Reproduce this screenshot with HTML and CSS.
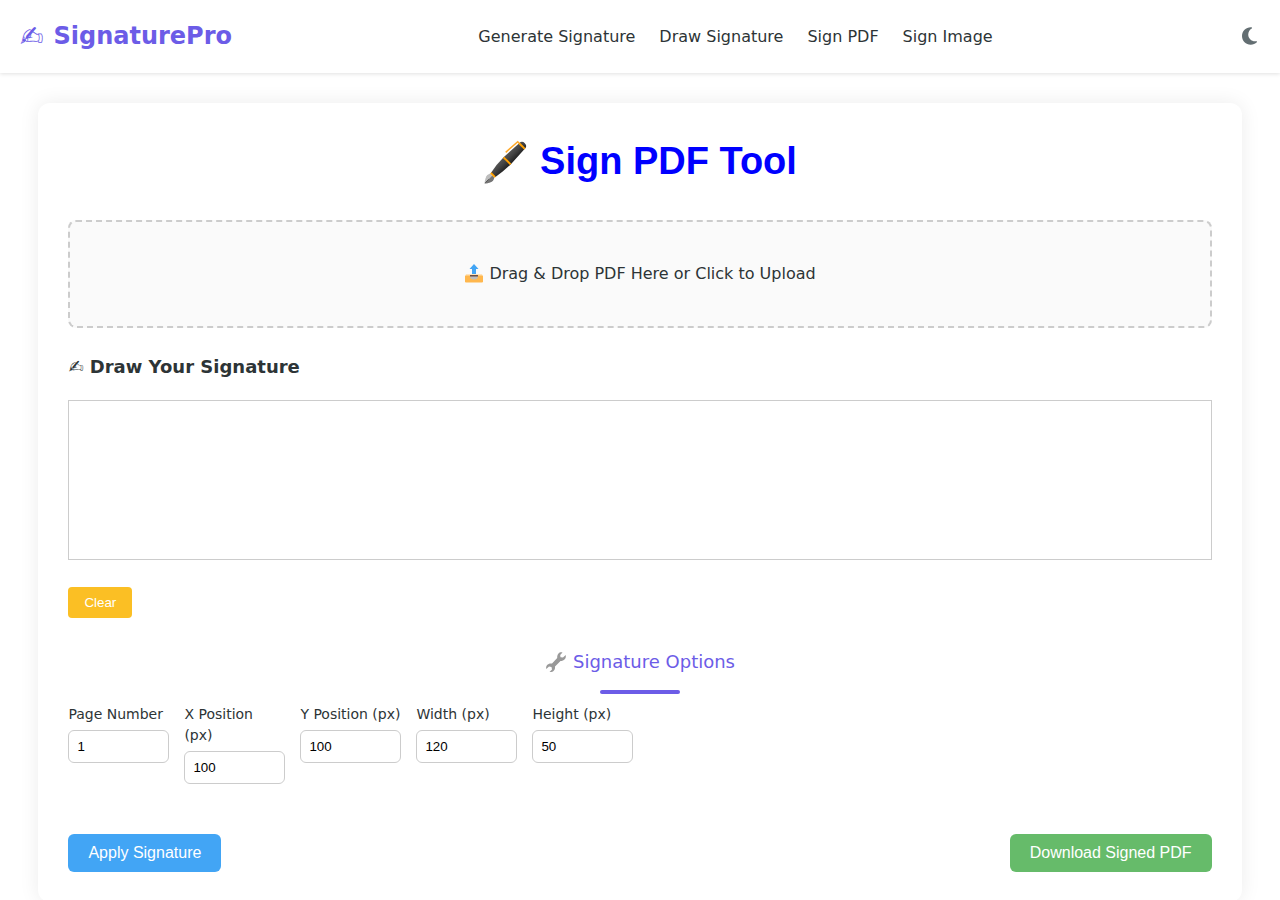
FILE: index.html
```html
<!DOCTYPE html>
<html lang="en">
<head>
<meta charset="utf-8">
<title>Sign PDF Tool - SignaturePro</title>
<link rel="stylesheet" href="styles.css">
</head>
<body>
<header class="navbar">
  <a class="logo" href="#"><span class="logo-icon">✍</span><span>SignaturePro</span></a>
  <nav class="nav-links">
    <a href="#">Generate Signature</a>
    <a href="#">Draw Signature</a>
    <a href="#">Sign PDF</a>
    <a href="#">Sign Image</a>
  </nav>
  <button class="theme-toggle" type="button" aria-label="Toggle dark mode">
    <svg viewBox="0 0 384 512" aria-hidden="true"><path d="M223.500 32C100 32 0 132.300 0 256S100 480 223.500 480c60.600 0 115.500-24.200 155.800-63.400c5-4.900 6.300-12.500 3.100-18.700s-10.100-9.700-17-8.500c-9.800 1.700-19.800 2.600-30.100 2.600c-96.900 0-175.500-78.800-175.500-176c0-65.800 36-123.100 89.300-153.300c6.100-3.500 9.200-10.500 7.700-17.300s-7.300-11.900-14.300-12.500c-6.300-.5-12.600-.8-19-.8z"/></svg>
  </button>
</header>
<main class="tool">
  <h1>
    <svg class="pen" viewBox="0 0 46 46" aria-hidden="true">
      <defs>
        <linearGradient id="barrel" x1="0" y1="0" x2="1" y2="0"><stop offset="0" stop-color="#555"/><stop offset=".45" stop-color="#424242"/><stop offset="1" stop-color="#212121"/></linearGradient>
      </defs>
      <g transform="translate(1.500 44.500) rotate(45)">
        <path d="M0 0Q-4-5-4-8L-3-11H3L4-8Q4-5 0 0Z" fill="#bdbdbd"/>
        <path d="M0 0V-11H3L4-8Q4-5 0 0Z" fill="#757575"/>
        <path d="M0-1V-6" stroke="#424242" stroke-width=".7"/>
        <path d="M-3-12Q-5-22-5-32H5Q5-22 3-12Z" fill="url(#barrel)"/>
        <path d="M-5-32L-4-53Q-4-57 0-57Q4-57 4-53L5-32Z" fill="url(#barrel)"/>
        <path d="M-3-12H3" stroke="#ffa000" stroke-width="2"/>
        <path d="M-5-32H5" stroke="#ffa000" stroke-width="2"/>
        <path d="M-4-53H4" stroke="#ffa000" stroke-width="2"/>
        <path d="M-4-53H-6L-7-37" fill="none" stroke="#ffa726" stroke-width="1.500"/>
      </g>
    </svg>
    Sign PDF Tool
  </h1>
  <button class="drop-zone" type="button">
    <svg class="tray" viewBox="0 0 20 20" aria-hidden="true">
      <path d="M2 10.500H18L19 12V18H1V12Z" fill="#ffcc80"/>
      <path d="M1 12H6Q7 15 10 15T14 12H19V17.500Q19 18.500 18 18.500H2Q1 18.500 1 17.500Z" fill="#ffb74d"/>
      <path d="M6 12H14Q14 15.500 10 15.500T6 12Z" fill="#bdbdbd"/>
      <path d="M6 11H14V12.500H6Z" fill="#6d4c41"/>
      <path d="M10 0L14.500 5H12V10H8V5H5.500Z" fill="#42a5f5"/>
    </svg>
    Drag &amp; Drop PDF Here or Click to Upload
  </button>
  <h3>✍ Draw Your Signature</h3>
  <canvas class="pad" aria-label="Signature pad"></canvas>
  <button class="clear" type="button">Clear</button>
  <h2>
    <svg class="wrench" viewBox="0 0 22 22" aria-hidden="true">
      <path d="M17.500 1.500C15 .5 12 2.500 12.200 7L7 12.500C3 12 .5 14.500 1.300 18L4 15.500L6.500 16L7 18.500L4.500 21C8 21.500 10.500 19 10 15.500L15.500 10C19 10 21.500 7.500 20.700 4L18 6.500L15.500 6.200L15.200 4Z" fill="#999"/>
    </svg>
    Signature Options
  </h2>
  <div class="options">
    <label>Page Number<input type="number" value="1"></label>
    <label>X Position (px)<input type="number" value="100"></label>
    <label>Y Position (px)<input type="number" value="100"></label>
    <label>Width (px)<input type="number" value="120"></label>
    <label>Height (px)<input type="number" value="50"></label>
  </div>
  <div class="actions">
    <button class="apply" type="button">Apply Signature</button>
    <button class="download" type="button">Download Signed PDF</button>
  </div>
</main>
</body>
</html>
```
FILE: styles.css
```css
* { box-sizing: border-box; }
body {
  margin: 0;
  font-family: "DejaVu Sans", sans-serif;
  font-size: 16px;
  line-height: 24px;
  color: #2d3436;
  background: #fff;
}
button, input { font-family: "Liberation Sans", Arial, sans-serif; }
button { border: 0; cursor: pointer; }
.navbar {
  display: flex;
  align-items: center;
  justify-content: space-between;
  padding: 18px 20px;
  box-shadow: 0 1px 4px rgba(0, 0, 0, 0.12);
}
.navbar a { text-decoration: none; }
.logo {
  display: flex;
  align-items: center;
  gap: 10px;
  font-size: 24px;
  line-height: 37px;
  font-weight: 700;
  color: #6c5ce7;
}
.logo-icon { font-size: 28px; font-weight: 400; }
.nav-links { display: flex; gap: 24px; }
.nav-links a { color: #2d3436; }
.theme-toggle { display: flex; padding: 0 3px 2px; background: none; }
.theme-toggle svg { width: 15px; height: 20px; fill: #636e72; }
.tool {
  width: 94%;
  margin: 30px auto;
  padding: 30px;
  border-radius: 12px;
  box-shadow: 0 0 20px rgba(0, 0, 0, 0.08);
}
h1 {
  display: flex;
  align-items: center;
  justify-content: center;
  gap: 11px;
  margin: 0 0 30px;
  font: 700 38px/57px "Liberation Sans", Arial, sans-serif;
  color: #00f;
}
.pen { width: 46px; height: 46px; }
.drop-zone {
  display: flex;
  align-items: center;
  justify-content: center;
  gap: 5px;
  width: 100%;
  padding: 40px;
  border: 2px dashed #ccc;
  border-radius: 8px;
  background: #fafafa;
  color: #2d3436;
  font: 16px/24px "DejaVu Sans", sans-serif;
}
.tray { width: 20px; height: 20px; }
h3 { margin: 24px 0 18px; font-size: 18px; line-height: 30px; }
.pad { display: block; width: 100%; height: 160px; border: 1px solid #ccc; }
.clear {
  display: block;
  margin-top: 27px;
  padding: 8px 16px;
  border-radius: 4px;
  background: #fbbf24;
  color: #fff;
  line-height: 15px;
}
h2 {
  display: flex;
  flex-wrap: wrap;
  align-items: center;
  justify-content: center;
  column-gap: 6px;
  margin: 30px 0 10px;
  font-size: 18px;
  line-height: 28px;
  font-weight: 400;
  color: #6c5ce7;
}
.wrench { width: 22px; height: 22px; }
h2::after {
  content: "";
  width: 80px;
  height: 4px;
  margin: 14px calc(50% - 40px) 0;
  border-radius: 2px;
  background: #6c5ce7;
}
.options { display: flex; align-items: flex-start; gap: 15px; }
.options label { width: 101px; font-size: 14px; line-height: 21px; }
.options input {
  display: block;
  width: 100%;
  height: 33px;
  margin-top: 5px;
  padding: 8px;
  border: 1px solid #ccc;
  border-radius: 6px;
  color: #000;
}
.actions { display: flex; justify-content: space-between; margin-top: 50px; }
.actions button {
  padding: 10px 20px;
  border-radius: 6px;
  color: #fff;
  font-size: 16px;
  line-height: 18px;
}
.apply { background: #42a5f5; }
.download { background: #66bb6a; }
```
